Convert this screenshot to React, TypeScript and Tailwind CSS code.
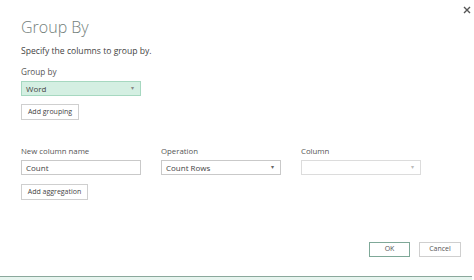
export default function App() {
  const font = { fontFamily: '"Open Sans", "Noto Sans", sans-serif' };
  return (
    <div className="relative w-[474px] h-[280px] bg-white overflow-hidden text-[#444]" style={font}>
      {/* close */}
      <button className="absolute right-[3px] top-[5px] w-[9px] h-[9px] flex items-center justify-center">
        <svg width="8" height="8" viewBox="0 0 8 8">
          <path d="M1 1L7 7M7 1L1 7" stroke="#555" strokeWidth="1.4" />
        </svg>
      </button>

      <div className="flex flex-col px-[21px] pt-[17px] h-[276px]">
        <h1 className="text-[16px] leading-[20px] font-light text-[#73807a]">Group By</h1>
        <p className="mt-[8px] text-[8.6px] leading-[12px] text-[#444]">Specify the columns to group by.</p>

        <p className="mt-[9px] text-[8.2px] leading-[12px] text-[#555]">Group by</p>
        <div className="mt-[3px] w-[120px] h-[15px] bg-[#d4efe2] border border-[#a6d8c0] flex items-center justify-between px-[4px]">
          <span className="text-[8px] text-[#444]">Word</span>
          <span className="text-[6px] text-[#888] mr-[2px]">▾</span>
        </div>
        <button className="mt-[8px] w-[58px] h-[16px] border border-[#cfcfcf] bg-white text-[7px] text-[#444]">Add grouping</button>

        <div className="mt-[25px] flex gap-[20px]">
          <div className="w-[120px] flex flex-col">
            <span className="text-[7.8px] leading-[12px] text-[#555]">New column name</span>
            <div className="mt-[3px] h-[15px] border border-[#c9c9c9] flex items-center px-[4px] text-[8px]">Count</div>
          </div>
          <div className="w-[120px] flex flex-col">
            <span className="text-[7.8px] leading-[12px] text-[#555]">Operation</span>
            <div className="mt-[3px] h-[15px] border border-[#c9c9c9] flex items-center justify-between px-[4px] text-[8px]">
              <span>Count Rows</span>
              <span className="text-[6px] text-[#666] mr-[2px]">▾</span>
            </div>
          </div>
          <div className="w-[120px] flex flex-col">
            <span className="text-[7.8px] leading-[12px] text-[#555]">Column</span>
            <div className="mt-[3px] h-[15px] border border-[#dcdcdc] flex items-center justify-end px-[4px]">
              <span className="text-[6px] text-[#bbb] mr-[2px]">▾</span>
            </div>
          </div>
        </div>
        <button className="mt-[9px] w-[67px] h-[16px] border border-[#cfcfcf] bg-white text-[7px] text-[#444]">Add aggregation</button>

        <div className="mt-auto mb-[19px] flex justify-end gap-[9px] mr-[-8px]">
          <button className="w-[41px] h-[15px] border border-[#7fa898] bg-white text-[7px] text-[#555]">OK</button>
          <button className="w-[42px] h-[15px] border border-[#cfcfcf] bg-white text-[7px] text-[#555]">Cancel</button>
        </div>
      </div>
      <div className="h-[1px] w-[472px] bg-[#8aa89c]" />
      <div className="h-[3px] w-[472px] bg-[#e6f4ee]" />
    </div>
  );
}
